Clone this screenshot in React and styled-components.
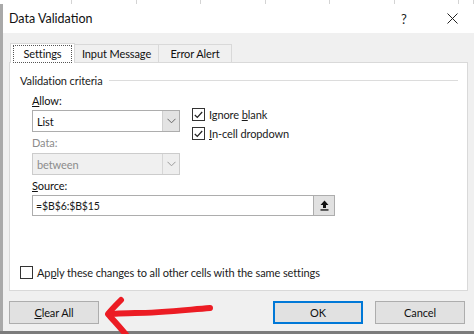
import React from 'react'
import styled, { createGlobalStyle } from 'styled-components'

const GlobalStyle = createGlobalStyle`
  html, body {
    margin: 0;
    padding: 0;
    background: #7c7c7c;
  }
  body {
    font-family: Lato, 'Noto Sans', sans-serif;
    font-size: 11px;
    letter-spacing: -0.1px;
    color: #1a1a1a;
  }
`

const Screen = styled.div`
  position: relative;
  width: 474px;
  height: 334px;
  overflow: hidden;
  background: #7c7c7c;
  display: flex;
  flex-direction: column;
`

const SheetStrip = styled.div`
  height: 4px;
  background: #fff;
  display: flex;
`

const SheetCell = styled.div`
  flex: 0 0 ${p => p.w}px;
  border-right: 1px solid #d4d4d4;
  box-sizing: border-box;
`

const Body = styled.div`
  display: flex;
  height: 327px;
`

const LeftEdge = styled.div`
  width: 3px;
  background: #a9a9a9;
`

const Dialog = styled.div`
  flex: 1;
  background: #f0f0f0;
  display: flex;
  flex-direction: column;
`

const TitleBar = styled.div`
  height: 29px;
  background: #fff;
  display: flex;
  align-items: center;
  padding-left: 6px;
  padding-right: 16px;
`

const Title = styled.div`
  flex: 1;
  font-size: 12.5px;
  letter-spacing: 0;
  color: #111;
  padding-bottom: 1px;
`

const Help = styled.div`
  font-size: 13px;
  color: #222;
  width: 46px;
`

const Content = styled.div`
  padding: 9px 6px 0 6px;
  display: flex;
  flex-direction: column;
`

const Tabs = styled.div`
  display: flex;
  align-items: flex-end;
  height: 20px;
  padding-left: 1px;
`

const Tab = styled.div`
  height: ${p => (p.active ? 20 : 18)}px;
  width: ${p => p.w}px;
  box-sizing: border-box;
  display: flex;
  align-items: center;
  justify-content: center;
  border: 1px solid #d9d9d9;
  border-bottom: none;
  margin-left: ${p => (p.active ? 0 : -1)}px;
  background: ${p => (p.active ? '#fff' : '#f0f0f0')};
  position: relative;
  z-index: ${p => (p.active ? 1 : 0)};
  margin-bottom: ${p => (p.active ? -1 : 0)}px;
  color: #111;
`

const Focus = styled.span`
  border: 1px dotted #555;
  padding: 1px 9px;
  line-height: 14px;
`

const Panel = styled.div`
  height: 229px;
  box-sizing: border-box;
  background: #fff;
  border: 1px solid #d9d9d9;
  padding: 9px 9px 0 10px;
  display: flex;
  flex-direction: column;
`

const GroupHeader = styled.div`
  height: 16px;
  display: flex;
  align-items: center;
  gap: 6px;
  &::after {
    content: '';
    flex: 1;
    border-top: 1px solid #dcdcdc;
    margin-top: 1px;
  }
`

const Criteria = styled.div`
  padding-left: 12px;
  display: flex;
  flex-direction: column;
`

const Split = styled.div`
  display: flex;
  gap: 12px;
`

const Column = styled.div`
  display: flex;
  flex-direction: column;
`

const Label = styled.div`
  height: 14px;
  line-height: 14px;
  margin-top: ${p => p.mt}px;
  color: ${p => (p.disabled ? '#8c8c8c' : '#111')};
`

const Select = styled.div`
  margin-top: ${p => p.mt}px;
  width: 148px;
  height: 22px;
  box-sizing: border-box;
  display: flex;
  border: 1px solid ${p => (p.disabled ? '#cccccc' : '#adadad')};
  background: ${p => (p.disabled ? '#f0f0f0' : '#fff')};
  color: ${p => (p.disabled ? '#8c8c8c' : '#111')};
`

const SelectText = styled.div`
  flex: 1;
  display: flex;
  align-items: center;
  padding-left: 4px;
`

const SelectButton = styled.div`
  width: 16px;
  display: flex;
  align-items: center;
  justify-content: center;
  background: ${p => (p.disabled ? '#eeeeee' : '#e3e3e3')};
  border-left: 1px solid ${p => (p.disabled ? '#d6d6d6' : '#cfcfcf')};
`

const Checks = styled.div`
  padding-top: 20px;
  display: flex;
  flex-direction: column;
`

const CheckRow = styled.div`
  height: 19px;
  display: flex;
  align-items: flex-start;
  gap: 4px;
  margin-top: ${p => p.mt || 0}px;
`

const Box = styled.div`
  width: 13px;
  height: 13px;
  box-sizing: border-box;
  border: 1px solid #333;
  background: #fff;
  display: flex;
  align-items: center;
  justify-content: center;
`

const CheckText = styled.span`
  line-height: 13px;
`

const SourceRow = styled.div`
  margin-top: 2px;
  width: 303px;
  height: 21px;
  box-sizing: border-box;
  display: flex;
  border: 1px solid #adadad;
`

const SourceText = styled.div`
  flex: 1;
  display: flex;
  align-items: center;
  padding-left: 3px;
  font-size: 10.5px;
`

const RefButton = styled.div`
  width: 20px;
  display: flex;
  align-items: center;
  justify-content: center;
  background: #e1e1e1;
  border-left: 1px solid #adadad;
`

const Buttons = styled.div`
  margin-top: 10px;
  display: flex;
  gap: 12px;
`

const Button = styled.div`
  width: 90px;
  height: 23px;
  box-sizing: border-box;
  display: flex;
  align-items: center;
  justify-content: center;
  background: #e1e1e1;
  border: ${p => (p.primary ? '2px solid #0078d7' : '1px solid #adadad')};
  color: #111;
  margin-left: ${p => p.ml || 0}px;
`

const Arrow = styled.svg`
  position: absolute;
  left: 0;
  top: 0;
  pointer-events: none;
`

const Chevron = ({ color }) => (
  <svg width="9" height="6" viewBox="0 0 9 6">
    <path d="M0.5 0.8 L4.5 4.8 L8.5 0.8" fill="none" stroke={color} strokeWidth="1" />
  </svg>
)

const Tick = () => (
  <svg width="9" height="8" viewBox="0 0 9 8">
    <path d="M0.8 4 L3.3 6.5 L8.2 1" fill="none" stroke="#222" strokeWidth="1.2" />
  </svg>
)

const SheetWidths = [72, 65, 64, 65, 64, 65, 64, 15]

export default function App() {
  return (
    <Screen>
      <GlobalStyle />
      <SheetStrip>
        {SheetWidths.map((w, i) => (
          <SheetCell key={i} w={w} />
        ))}
      </SheetStrip>
      <Body>
        <LeftEdge />
        <Dialog>
          <TitleBar>
            <Title>Data Validation</Title>
            <Help>?</Help>
            <svg width="11" height="11" viewBox="0 0 11 11">
              <path d="M0.5 0.5 L10.5 10.5 M10.5 0.5 L0.5 10.5" stroke="#222" strokeWidth="1" />
            </svg>
          </TitleBar>
          <Content>
            <Tabs>
              <Tab active w={65}>
                <Focus>Settings</Focus>
              </Tab>
              <Tab w={85}>Input Message</Tab>
              <Tab w={74}>Error Alert</Tab>
            </Tabs>
            <Panel>
              <GroupHeader>Validation criteria</GroupHeader>
              <Criteria>
                <Split>
                  <Column>
                    <Label mt={6}>
                      <u>A</u>llow:
                    </Label>
                    <Select mt={2}>
                      <SelectText>List</SelectText>
                      <SelectButton>
                        <Chevron color="#666" />
                      </SelectButton>
                    </Select>
                    <Label mt={4} disabled>
                      Data:
                    </Label>
                    <Select mt={3} disabled>
                      <SelectText>between</SelectText>
                      <SelectButton disabled>
                        <Chevron color="#9a9a9a" />
                      </SelectButton>
                    </Select>
                  </Column>
                  <Checks>
                    <CheckRow>
                      <Box>
                        <Tick />
                      </Box>
                      <CheckText>
                        Ignore <u>b</u>lank
                      </CheckText>
                    </CheckRow>
                    <CheckRow>
                      <Box>
                        <Tick />
                      </Box>
                      <CheckText>
                        <u>I</u>n-cell dropdown
                      </CheckText>
                    </CheckRow>
                  </Checks>
                </Split>
                <Label mt={4}>
                  <u>S</u>ource:
                </Label>
                <SourceRow>
                  <SourceText>=$B$6:$B$15</SourceText>
                  <RefButton>
                    <svg width="9" height="11" viewBox="0 0 9 11">
                      <path d="M4.5 0.5 L8.5 5 L6 5 L6 8 L3 8 L3 5 L0.5 5 Z" fill="#111" />
                      <rect x="0.5" y="9.3" width="8" height="1.3" fill="#111" />
                    </svg>
                  </RefButton>
                </SourceRow>
              </Criteria>
              <CheckRow mt={50}>
                <Box />
                <CheckText>
                  Ap<u>p</u>ly these changes to all other cells with the same settings
                </CheckText>
              </CheckRow>
            </Panel>
            <Buttons>
              <Button>
                <span>
                  <u>C</u>lear All
                </span>
              </Button>
              <Button primary ml={162}>
                OK
              </Button>
              <Button>Cancel</Button>
            </Buttons>
          </Content>
        </Dialog>
      </Body>
      <Arrow width="474" height="334" viewBox="0 0 474 334">
        <path
          d="M210 308 C 185 310, 160 313, 135 313 C 125 313, 115 314, 109 314"
          fill="none"
          stroke="#ec1c24"
          strokeWidth="6"
          strokeLinecap="round"
        />
        <path
          d="M121 300 C 116 305, 111 310, 108 314 C 113 320, 120 327, 127 336"
          fill="none"
          stroke="#ec1c24"
          strokeWidth="6"
          strokeLinecap="round"
          strokeLinejoin="round"
        />
      </Arrow>
    </Screen>
  )
}
